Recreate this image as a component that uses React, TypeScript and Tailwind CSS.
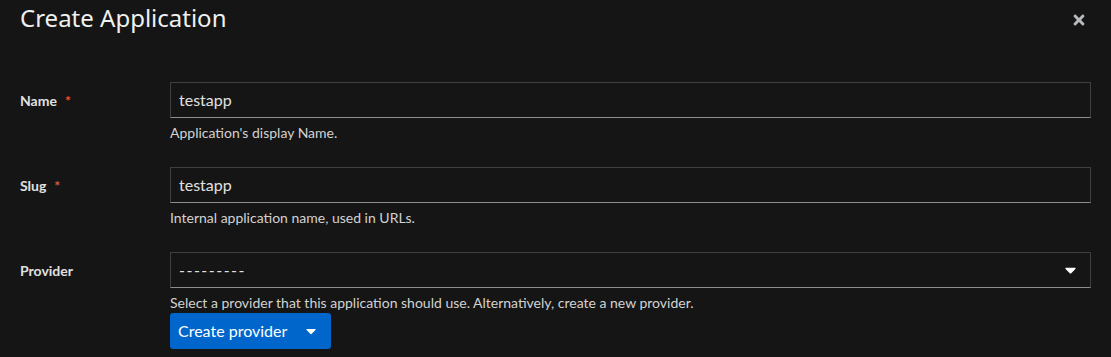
import React from 'react';

const Caret = ({ className }: { className?: string }) => (
  <svg viewBox="0 0 320 512" className={className} fill="currentColor" aria-hidden="true">
    <path d="M31.3 192h257.3c17.8 0 26.7 21.5 14.1 34.1L174.1 354.8c-7.8 7.8-20.5 7.8-28.3 0L17.2 226.1C4.6 213.5 13.5 192 31.3 192z" />
  </svg>
);

const CloseIcon = () => (
  <svg viewBox="0 0 352 512" className="w-[12px] h-[16px] text-[#b8bbbe]" fill="currentColor" aria-hidden="true">
    <path d="M242.72 256l100.07-100.07c12.28-12.28 12.28-32.19 0-44.48l-22.24-22.24c-12.28-12.28-32.19-12.28-44.48 0L176 189.28 75.930 89.21c-12.28-12.28-32.19-12.28-44.48 0L9.21 111.45c-12.28 12.28-12.28 32.19 0 44.48L109.28 256 9.21 356.07c-12.28 12.28-12.28 32.19 0 44.48l22.24 22.24c12.28 12.28 32.2 12.28 44.48 0L176 322.72l100.07 100.07c12.28 12.28 32.2 12.28 44.48 0l22.24-22.24c12.28-12.28 12.28-32.19 0-44.48L242.72 256z" />
  </svg>
);

interface FieldProps {
  label: string;
  required?: boolean;
  helper: string;
  children: React.ReactNode;
}

const Field: React.FC<FieldProps> = ({ label, required, helper, children }) => (
  <div className="grid grid-cols-[150px_1fr]">
    <div className="flex items-center h-[36px] text-[14px] font-bold text-[#e0e0e0]">
      {label}
      {required && <span className="ml-[8px] text-[#e4572e]">*</span>}
    </div>
    <div>
      {children}
      <p className="mt-[4px] text-[14px] leading-[21px] text-[#d2d2d2]">{helper}</p>
    </div>
  </div>
);

const TextInput = ({ value }: { value: string }) => (
  <div className="h-[36px] flex items-center px-[8px] border border-[#3d3f42] border-b-[#8a8d90] bg-[#151515] text-[16px] text-[#e0e0e0]">
    {value}
  </div>
);

export default function App() {
  return (
    <div
      className="w-[1111px] h-[357px] overflow-hidden bg-[#151515] px-[20px] text-[#e0e0e0]"
      style={{ fontFamily: 'Lato, "Noto Sans", sans-serif' }}
    >
      {/* Header */}
      <div className="flex items-start justify-between h-[82px]">
        <h1
          className="text-[24px] leading-[36px] font-normal text-[#f0f0f0]"
          style={{ fontFamily: '"Noto Sans", sans-serif' }}
        >
          Create Application
        </h1>
        <button className="mt-[12px] mr-[6px] flex items-center">
          <CloseIcon />
        </button>
      </div>

      {/* Form */}
      <div className="flex flex-col gap-[24px]">
        <Field label="Name" required helper="Application's display Name.">
          <TextInput value="testapp" />
        </Field>
        <Field label="Slug" required helper="Internal application name, used in URLs.">
          <TextInput value="testapp" />
        </Field>
        <Field
          label="Provider"
          helper="Select a provider that this application should use. Alternatively, create a new provider."
        >
          <div className="h-[36px] flex items-center justify-between pl-[8px] pr-[14px] border border-[#3d3f42] border-b-[#8a8d90] text-[16px] text-[#e0e0e0]">
            <span className="tracking-[1.5px]">---------</span>
            <Caret className="w-[11px] h-[18px] text-white" />
          </div>
        </Field>
      </div>
      <div className="pl-[150px]">
        <button className="h-[36px] w-[161px] flex items-center gap-[19px] px-[8px] bg-[#0066cc] rounded-[3px] text-[16px] text-white">
          Create provider
          <Caret className="w-[10px] h-[16px] text-white" />
        </button>
      </div>
    </div>
  );
}
